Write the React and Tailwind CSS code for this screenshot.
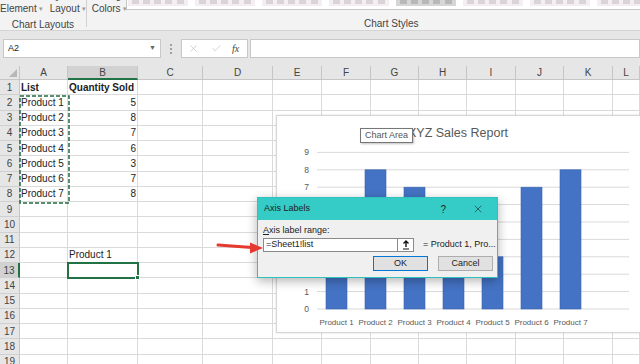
import { X, Check } from 'lucide-react'

const COLS = ['A', 'B', 'C', 'D', 'E', 'F', 'G', 'H', 'I', 'J', 'K', 'L']
const VALUES = [5, 8, 7, 6, 3, 7, 8]

function cellContent(row, col) {
  if (row === 1 && col === 0) return <span className="font-bold">List</span>
  if (row === 1 && col === 1) return <span className="font-bold">Quantity Sold</span>
  if (row >= 2 && row <= 8 && col === 0) return <span>Product {row - 1}</span>
  if (row >= 2 && row <= 8 && col === 1) return <span className="ml-auto pr-[1px]">{VALUES[row - 2]}</span>
  if (row === 12 && col === 1) return <span>Product 1</span>
  return null
}

function Ribbon() {
  const thumbs = [130, 199, 266, 332, 399, 466, 532, 600]
  return (
    <div className="h-[31px] bg-[#f3f3f3] border-b border-[#d4d4d4] flex text-[10px] text-[#444] overflow-hidden">
      <div className="w-[89px] h-[27px] border-r border-[#d0d0d0] flex flex-col items-center">
        <div className="-mt-[10px] h-[12px] leading-[12px] w-full pl-[1px]">Add Chart&nbsp;&nbsp;Quick</div>
        <div className="mt-[1px] h-[12px] leading-[12px] w-full flex items-center whitespace-nowrap">
          <span>Element</span><span className="text-[7px] text-[#999] ml-[2px]">▾</span>
          <span className="ml-[7px]">Layout</span><span className="text-[7px] text-[#999] ml-[2px]">▾</span>
        </div>
        <div className="mt-[4px] h-[12px] leading-[12px]">Chart Layouts</div>
      </div>
      <div className="w-[39px] flex flex-col pl-[5px]">
        <div className="-mt-[10px] h-[12px] leading-[12px]">Change</div>
        <div className="mt-[1px] h-[12px] leading-[12px] flex items-center">
          <span>Colors</span><span className="text-[7px] text-[#999] ml-[2px]">▾</span>
        </div>
      </div>
      <div className="flex-1 flex flex-col">
        <div className="h-[11px] border-l border-b border-[#c6c6c6] bg-white flex gap-[7px] pl-[1px]">
          {thumbs.map((x, i) => (
            <div
              key={x}
              className={`w-[60px] h-[6px] flex justify-around items-start px-[2px] ${i === 4 ? 'bg-[#d6d6d6]' : 'bg-[#f4eef3]'}`}
            >
              {[0, 1, 2, 3, 4].map(k => (
                <div key={k} className={`w-[7px] h-[4px] ${i === 4 ? 'bg-[#b8b8b8]' : 'bg-[#d8d4d8]'}`} />
              ))}
            </div>
          ))}
        </div>
        <div className="mt-[8px] h-[12px] leading-[12px] text-center">Chart Styles</div>
      </div>
    </div>
  )
}

function FormulaBar() {
  return (
    <div className="h-[35px] bg-[#e6e6e6] flex items-center">
      <div className="ml-[3px] w-[158px] h-[19px] bg-white border border-[#c8c8c8] flex items-center px-[4px] text-[9px] text-[#222]">
        <span>A2</span>
        <span className="ml-auto text-[7px] text-[#666]">▼</span>
      </div>
      <div className="w-[20px] flex flex-col items-center gap-[2px]">
        <div className="w-[2px] h-[2px] bg-[#a0a0a0]" />
        <div className="w-[2px] h-[2px] bg-[#a0a0a0]" />
        <div className="w-[2px] h-[2px] bg-[#a0a0a0]" />
      </div>
      <div className="w-[67px] h-[19px] bg-white border border-[#c8c8c8] flex items-center">
        <X size={11} strokeWidth={1.3} className="ml-[6px] text-[#b4b4b4]" />
        <Check size={11} strokeWidth={1.3} className="ml-[12px] text-[#b4b4b4]" />
        <span className="ml-[10px] text-[10px] italic text-[#444] font-['Liberation_Serif',serif]">fx</span>
      </div>
      <div className="ml-[2px] flex-1 h-[19px] bg-white border border-[#c8c8c8]" />
    </div>
  )
}

function Sheet() {
  const rows = Array.from({ length: 20 }, (_, i) => i + 1)
  return (
    <div className="grid grid-cols-[20px_48px_70px_65px_70px_49px_49px_48px_48px_49px_48px_49px_1fr] grid-rows-[14px] auto-rows-[15.25px] text-[10px] text-[#222]">
      <div className="bg-[#e6e6e6] border-r border-b border-[#c6c6c6] flex items-end justify-end p-[2px]">
        <svg width="8" height="8"><polygon points="8,0 8,8 0,8" fill="#b8b8b8" /></svg>
      </div>
      {COLS.map(c => (
        <div
          key={c}
          className={`flex items-center justify-center text-[#444] border-r border-[#c6c6c6] ${c === 'B' ? 'bg-[#d2d2d2] border-b-2 border-b-[#217346]' : 'bg-[#e6e6e6] border-b border-b-[#c6c6c6]'}`}
        >
          {c}
        </div>
      ))}
      {rows.map(r => (
        <div key={r} className="contents">
          <div
            className={`flex items-center justify-center text-[#444] border-b border-[#d0d0d0] ${r === 13 ? 'bg-[#d2d2d2] border-r-2 border-r-[#217346]' : 'bg-[#e6e6e6] border-r border-r-[#c6c6c6]'}`}
          >
            {r}
          </div>
          {COLS.map((c, ci) => (
            <div key={c} className="border-r border-b border-[#dadada] flex items-center pl-[1px] whitespace-nowrap overflow-visible">
              {cellContent(r, ci)}
            </div>
          ))}
        </div>
      ))}
    </div>
  )
}

function Chart() {
  const y = v => 193 - 17.4 * v
  return (
    <div className="absolute left-[276px] top-[115px] w-[380px] h-[218px] bg-white border border-[#d6d6d6] shadow-[0_0_2px_rgba(0,0,0,0.15)]">
      <svg width="378" height="216" className="font-['Liberation_Sans',sans-serif]">
        <text x="181" y="21" textAnchor="middle" fontSize="12.5" fill="#595959">XYZ Sales Report</text>
        {Array.from({ length: 10 }, (_, v) => (
          <g key={v}>
            <line x1="40" x2="352" y1={y(v)} y2={y(v)} stroke="#d9d9d9" strokeWidth="1" />
            <text x="32" y={y(v) + 3} textAnchor="end" fontSize="8.5" fill="#595959">{v}</text>
          </g>
        ))}
        {VALUES.map((v, i) => (
          <g key={i}>
            <rect x={49 + i * 39} y={y(v)} width="21" height={17.4 * v} fill="#4472c4" stroke="#3a64b0" strokeWidth="0.6" />
            <text x={59.5 + i * 39} y="209" textAnchor="middle" fontSize="8" fill="#595959">Product {i + 1}</text>
          </g>
        ))}
      </svg>
    </div>
  )
}

function Dialog() {
  return (
    <div className="absolute left-[257px] top-[197px] w-[241px] h-[81px] bg-[#f0f0f0] border border-[#2fc2bd] shadow-[0_3px_10px_rgba(0,0,0,0.3)] text-[9px] text-[#222] flex flex-col">
      <div className="h-[22px] shrink-0 bg-[#35cbc6] flex items-center pl-[6px]">
        <span>Axis Labels</span>
        <span className="ml-auto mr-[26px] text-[10px]">?</span>
        <X size={12} strokeWidth={1.2} className="mr-[13px] text-[#222]" />
      </div>
      <div className="pl-[5px] pt-[4px] h-[16px] leading-[12px] shrink-0">
        <span className="underline">A</span>xis label range:
      </div>
      <div className="flex items-center mt-[2px] pl-[5px]">
        <div className="w-[135px] h-[14px] bg-white border border-[#8a8a8a] flex items-center pl-[2px]">=Sheet1!list</div>
        <div className="w-[16px] h-[14px] bg-white border border-l-0 border-[#8a8a8a] flex items-center justify-center">
          <svg width="8" height="10" viewBox="0 0 8 10">
            <path d="M4 1 L4 7 M1.5 3.5 L4 1 L6.5 3.5" stroke="#111" strokeWidth="1.4" fill="none" />
            <line x1="1" x2="7" y1="9" y2="9" stroke="#111" strokeWidth="1" />
          </svg>
        </div>
        <span className="ml-[9px] whitespace-nowrap">= Product 1, Pro...</span>
      </div>
      <div className="flex mt-[4px] pl-[115px] gap-[10px]">
        <div className="w-[55px] h-[15px] bg-[#e1e1e1] border border-[#0078d7] flex items-center justify-center">OK</div>
        <div className="w-[55px] h-[15px] bg-[#e1e1e1] border border-[#adadad] flex items-center justify-center">Cancel</div>
      </div>
    </div>
  )
}

export default function App() {
  return (
    <div className="relative w-[640px] h-[364px] overflow-hidden bg-white font-['Liberation_Sans',Arial,sans-serif]">
      <Ribbon />
      <FormulaBar />
      <Sheet />

      {/* copy marquee round A2:A8 */}
      <svg className="absolute left-[19px] top-[95px]" width="51" height="109">
        <rect x="1" y="1" width="49" height="107" fill="none" stroke="#1e6b3e" strokeWidth="1.5" strokeDasharray="4 2" />
      </svg>

      {/* active cell B13 */}
      <div className="absolute left-[67px] top-[262px] w-[72px] h-[17px] border-2 border-[#217346]" />
      <div className="absolute left-[135px] top-[275px] w-[5px] h-[5px] bg-[#217346] border border-white" />

      <Chart />

      <div className="absolute left-[360px] top-[128px] w-[53px] h-[15px] bg-white border border-[#777] shadow-[1px_1px_2px_rgba(0,0,0,0.25)] text-[9px] text-[#555] flex items-center justify-center">
        Chart Area
      </div>

      <Dialog />

      <svg className="absolute left-[214px] top-[238px]" width="52" height="20">
        <line x1="4" y1="7" x2="38" y2="9.5" stroke="#e53a30" strokeWidth="3" strokeLinecap="round" />
        <polygon points="49,10 36,4.5 36,15.5" fill="#e53a30" />
      </svg>
    </div>
  )
}
